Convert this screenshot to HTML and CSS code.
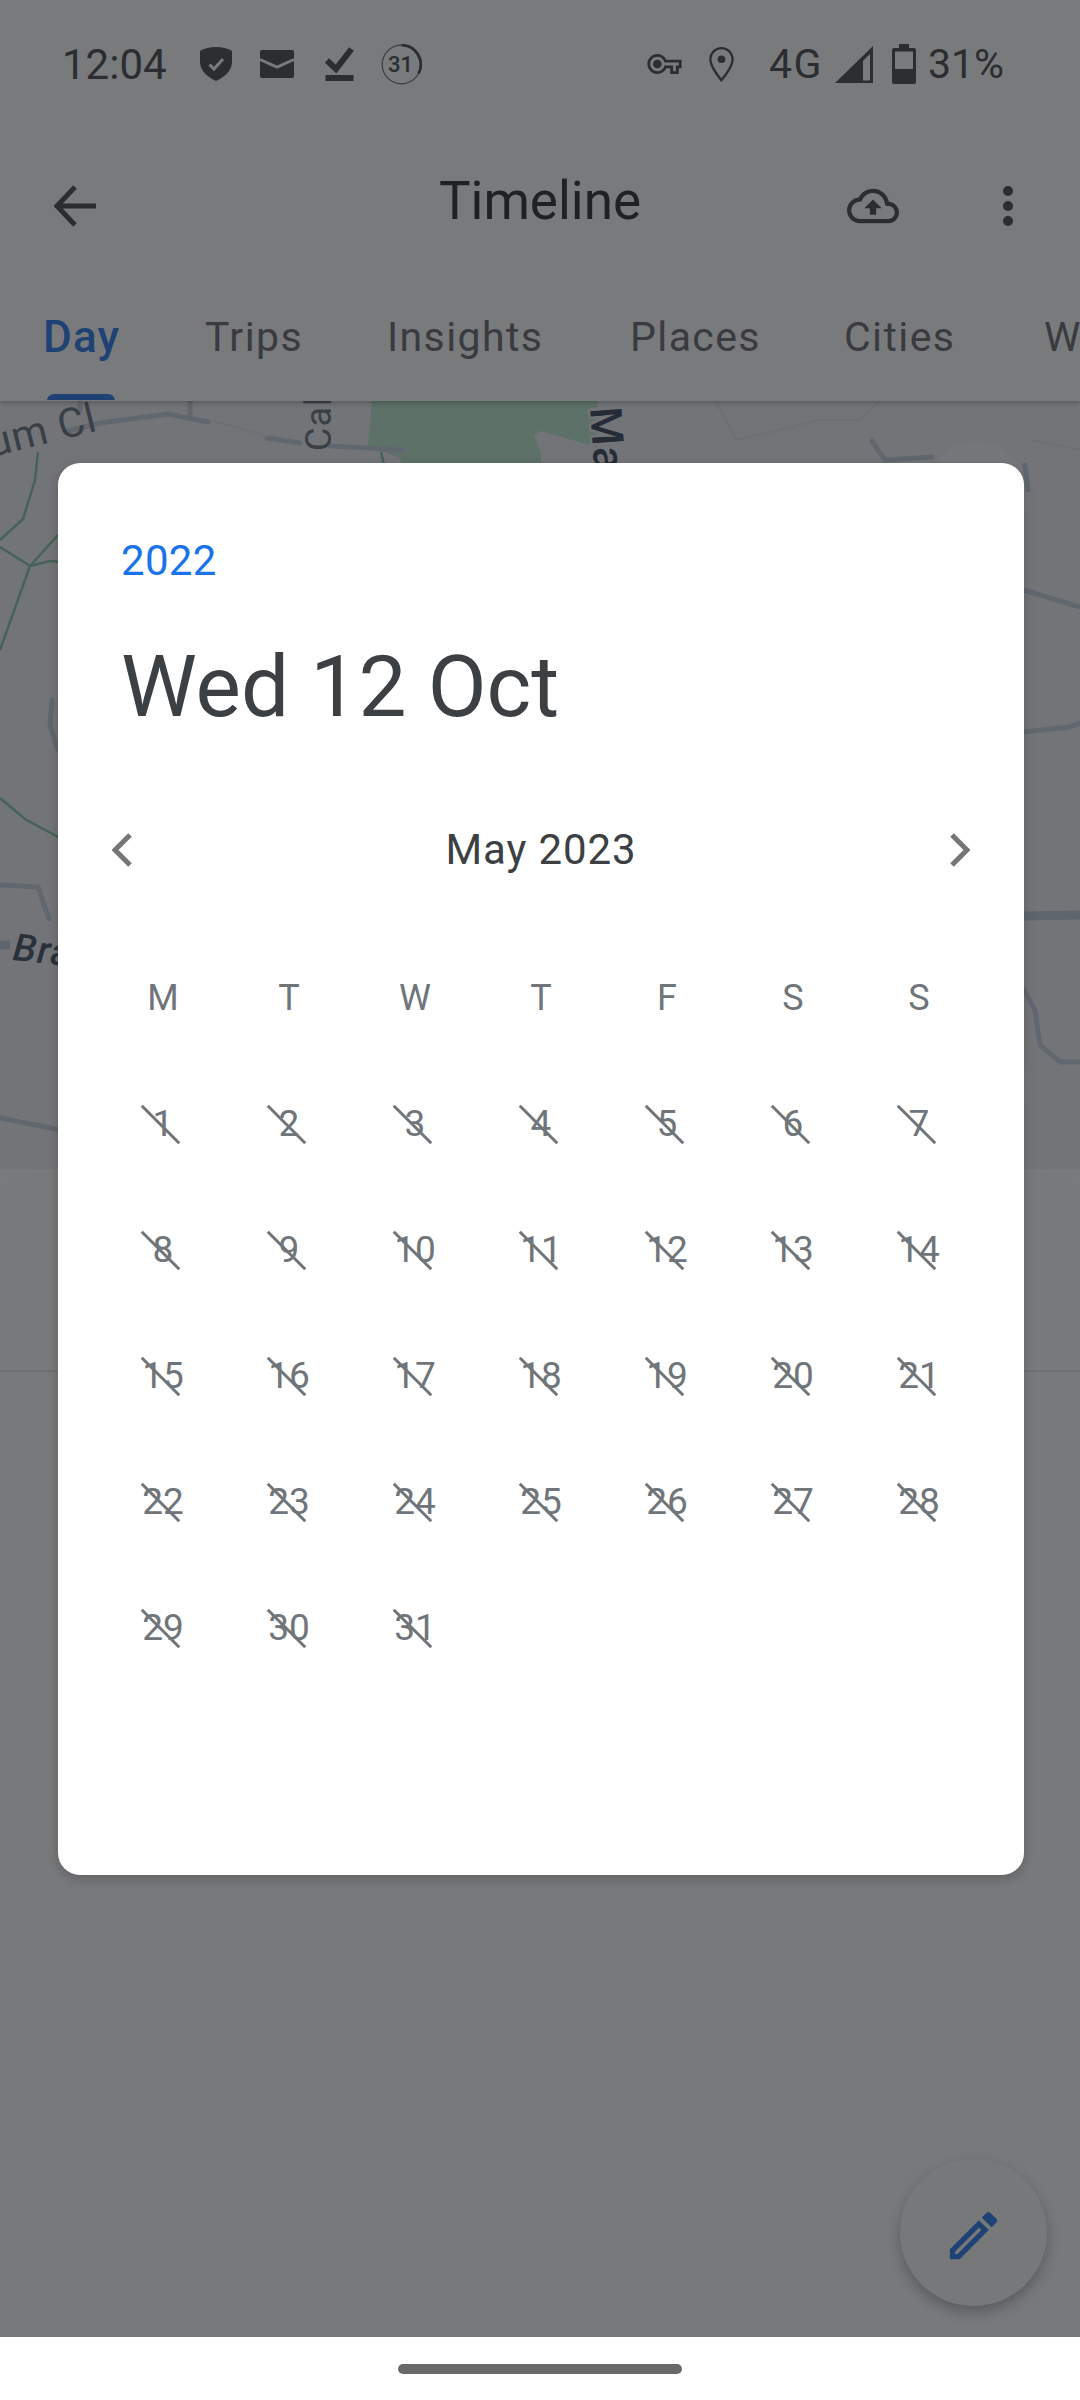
FILE: index.html
```html
<!DOCTYPE html>
<html lang="en">
<head>
<meta charset="utf-8">
<title>Timeline</title>
<link rel="stylesheet" href="styles.css">
</head>
<body>
<div class="app">
  <div class="content">
    <div class="page">
      <header class="header">
        <div class="status">
          <div class="status-group">
            <span class="clock">12:04</span>
            <svg class="i-shield" viewBox="0 0 34 34"><path class="solid" d="M17 0C23 0 29 1.500 33 4V15C33 24 25 30.500 17 34C9 30.500 1 24 1 15V4C5 1.500 11 0 17 0Z"/><path class="cut" d="M10.500 17.500l4.500 4.500 9-10"/></svg>
            <svg class="i-mail" viewBox="0 0 34 28"><rect class="solid" width="34" height="28" rx="2"/><path class="cut" d="M0 9.500l17 7.500 17-7.500"/></svg>
            <svg class="i-task" viewBox="0 0 28 34"><path class="line" d="M1.500 13.500l9 8.500L26 2"/><rect class="solid" y="28" width="28" height="6"/></svg>
            <svg class="i-cal" viewBox="0 0 40 41"><circle class="ring" cx="20" cy="20.500" r="19.300"/><path class="arc" d="M20 1.200A19.300 19.300 0 0 1 37 29.500"/><text class="cal-num" x="19" y="28">31</text></svg>
          </div>
          <div class="status-group right">
            <svg class="i-key" viewBox="0 5 24 14"><path class="solid" d="M22 19h-6v-4h-2.680c-1.140 2.420-3.600 4-6.320 4-3.860 0-7-3.140-7-7s3.140-7 7-7c2.720 0 5.170 1.580 6.320 4H24v6h-2v4zm-4-2h2v-4h2v-2H11.940l-.23-.67C11.010 8.340 9.110 7 7 7c-2.760 0-5 2.240-5 5s2.240 5 5 5c2.110 0 4.010-1.340 4.710-3.330l.23-.67H18v4zM7 15c-1.650 0-3-1.350-3-3s1.350-3 3-3 3 1.350 3 3-1.350 3-3 3z"/></svg>
            <svg class="i-pin" viewBox="5 2 14 20"><path class="solid" d="M12 2C8.130 2 5 5.130 5 9c0 5.250 7 13 7 13s7-7.750 7-13c0-3.870-3.130-7-7-7zM6.300 9c0-3 2.700-5.700 5.700-5.700s5.700 2.700 5.700 5.700c0 3.400-3.400 7.900-5.700 10.800C9.800 17 6.300 12.400 6.300 9z"/><circle class="solid" cx="12" cy="9" r="2.200"/></svg>
            <span class="net">4G</span>
            <svg class="i-signal" viewBox="0 0 38 37"><path class="solid" fill-rule="evenodd" d="M0 37L38 0V37ZM28 34.500H35V8L28 14.800Z"/></svg>
            <svg class="i-batt" viewBox="0 0 24 40"><path class="solid" fill-rule="evenodd" d="M7 0H17V4H22Q24 4 24 6V38Q24 40 22 40H2Q0 40 0 38V6Q0 4 2 4H7ZM3 7.500V25H21V7.500Z"/></svg>
            <span class="pct">31%</span>
          </div>
        </div>
        <div class="appbar">
          <div class="bar-left">
            <svg class="i-back" viewBox="0 0 42 42"><path class="line2" d="M42 21H4M21 2L3 21l18 19"/></svg>
          </div>
          <h1 class="title">Timeline</h1>
          <div class="bar-right">
            <svg class="i-cloud" viewBox="0 0 24 24"><path class="solid" d="M19.350 10.040C18.670 6.590 15.640 4 12 4 9.110 4 6.600 5.640 5.350 8.040 2.340 8.360 0 10.910 0 14c0 3.310 2.690 6 6 6h13c2.760 0 5-2.240 5-5 0-2.640-2.050-4.780-4.650-4.960zM19 18H6c-2.210 0-4-1.790-4-4 0-2.050 1.530-3.760 3.560-3.970l1.070-.11.5-.95C8.080 7.140 9.940 6 12 6c2.620 0 4.880 1.860 5.390 4.430l.3 1.500 1.530.11c1.560.1 2.780 1.410 2.780 2.960 0 1.650-1.350 3-3 3z"/><path class="solid" d="M8 13h2.550v3h2.900v-3H16l-4-4z"/></svg>
            <div class="dots"><i></i><i></i><i></i></div>
          </div>
        </div>
        <nav class="tabs">
          <span class="tab active">Day</span>
          <span class="tab">Trips</span>
          <span class="tab">Insights</span>
          <span class="tab">Places</span>
          <span class="tab">Cities</span>
          <span class="tab">Workouts</span>
        </nav>
      </header>
      <main class="main">
        <svg class="map" viewBox="0 401 1080 768">
          <rect x="0" y="401" width="1080" height="768" class="map-bg"/>
          <path class="park" d="M372 401H597V447L540 431L534 436L541 452V470H403L400 458L368 446Z"/>
          <g class="faint">
            <path d="M208 420L265 435"/>
            <path d="M715 401L737 440L820 420L860 420L880 401"/>
            <path d="M1030 440L1080 450"/>
          </g>
          <g class="trail">
            <path d="M38 452L35 480L23 519L0 540"/>
            <path d="M0 547L30 566L58 535"/>
            <path d="M30 566L0 650"/>
            <path d="M30 566L50 561L60 562"/>
            <path d="M0 798L25 819L60 838"/>
            <path d="M381 452L384 465"/>
          </g>
          <g class="road">
            <path d="M65 432L100 423L168 414L208 422M80 401V410M190 401V415"/>
            <path d="M267 438L300 443M330 446L403 450"/>
            <path d="M0 885L38 887L49 919"/>
            <path d="M0 1118L60 1130"/>
            <path d="M52 700L50 725L58 750"/>
            <path d="M872 441L885 460L932 457"/>
            <path d="M1024 590L1080 607"/>
            <path d="M1024 732L1070 727L1080 723"/>
            <path d="M1024 990L1035 1010L1040 1045L1060 1062L1080 1062"/>
          </g>
          <path class="road-wide" d="M1024 916L1080 915M0 945H10"/>
          <circle class="map-btn" cx="976" cy="496" r="53"/>
          <circle class="map-btn" cx="976" cy="1085" r="53"/>
          <path class="road" d="M1025 465L1028 490"/>
          <text class="lbl" transform="translate(-8 457) rotate(-14)">um Cl</text>
          <text class="lbl lbl-cal" transform="translate(331 451) rotate(-90)">Cal</text>
          <text class="lbl lbl-ma" transform="translate(590 408) rotate(86)">Ma</text>
          <text class="lbl lbl-dark" transform="translate(12 960) rotate(6)">Bra</text>
        </svg>
        <section class="sheet">
          <div class="sheet-row"></div>
        </section>
      </main>
    </div>
    <button class="fab" type="button" aria-label="Edit">
      <svg class="i-edit" viewBox="0 0 24 24"><path d="M14.060 9.020l.92.92L5.920 19H5v-.92l9.060-9.060M17.660 3c-.25 0-.51.1-.7.29l-1.830 1.830 3.750 3.750 1.830-1.830c.39-.39.39-1.020 0-1.410l-2.340-2.340c-.2-.2-.45-.29-.71-.29zm-3.600 3.190L3 17.250V21h3.750L17.810 9.940l-3.750-3.750z"/></svg>
    </button>
    <div class="scrim">
      <div class="dialog">
        <div class="year">2022</div>
        <div class="date">Wed 12 Oct</div>
        <div class="month-row">
          <span class="chev"><svg viewBox="0 0 20 34"><path d="M18 2L3 17l15 15"/></svg></span>
          <span class="month">May 2023</span>
          <span class="chev"><svg viewBox="0 0 20 34"><path d="M2 2l15 15L2 32"/></svg></span>
        </div>
        <div class="weekdays">
          <span>M</span><span>T</span><span>W</span><span>T</span><span>F</span><span>S</span><span>S</span>
        </div>
        <div class="days">
          <span>1</span><span>2</span><span>3</span><span>4</span><span>5</span><span>6</span><span>7</span>
          <span>8</span><span>9</span><span>10</span><span>11</span><span>12</span><span>13</span><span>14</span>
          <span>15</span><span>16</span><span>17</span><span>18</span><span>19</span><span>20</span><span>21</span>
          <span>22</span><span>23</span><span>24</span><span>25</span><span>26</span><span>27</span><span>28</span>
          <span>29</span><span>30</span><span>31</span>
        </div>
      </div>
    </div>
  </div>
  <footer class="navbar"><div class="pill"></div></footer>
</div>
</body>
</html>
```
FILE: styles.css
```css
* { box-sizing: border-box; }
html, body { margin: 0; padding: 0; }
body { width: 1080px; height: 2400px; overflow: hidden; background: #fff; font-family: Roboto, "Noto Sans", sans-serif; }

.app { display: flex; flex-direction: column; width: 1080px; height: 2400px; }
.content { position: relative; flex: 1; overflow: hidden; }
.page { display: flex; flex-direction: column; height: 100%; background: #fff; }
.navbar { display: flex; justify-content: center; align-items: center; flex: none; height: 63px; background: #fff; }
.pill { width: 284px; height: 10px; border-radius: 5px; background: #6a6a6a; }

/* icons */
.solid { fill: #3c4043; }
.cut { fill: none; stroke: #fff; stroke-width: 3; }
.line { fill: none; stroke: #3c4043; stroke-width: 6; }
.line2 { fill: none; stroke: #3c4043; stroke-width: 5; }

/* header */
.header { position: relative; flex: none; height: 401px; background: #fff; box-shadow: 0 2px 6px rgba(0,0,0,.3); }
.status { display: flex; justify-content: space-between; align-items: center; height: 128px; padding: 0 76px 0 62px; color: #3c4043; }
.status-group { display: flex; align-items: center; }
.clock { width: 103px; font-size: 42px; font-weight: 400; margin-right: 34px; white-space: nowrap; }
.i-shield { width: 34px; height: 34px; margin-right: 26px; }
.i-mail { width: 36px; height: 28px; margin-right: 30px; }
.i-task { width: 29px; height: 34px; margin-right: 27px; }
.i-cal { width: 41px; height: 41px; }
.ring { fill: none; stroke: #5f6368; stroke-width: 1.2; }
.arc { fill: none; stroke: #3c4043; stroke-width: 2.800; }
.cal-num { font-family: Roboto, sans-serif; font-size: 22px; font-weight: 500; text-anchor: middle; fill: #3c4043; }
.i-key { width: 35px; height: 20px; margin-right: 27px; }
.i-pin { width: 25px; height: 35px; margin-right: 35px; }
.net { font-size: 41px; letter-spacing: 1.500px; margin-right: 12px; white-space: nowrap; }
.i-signal { width: 38px; height: 37px; margin-right: 19px; }
.i-batt { width: 24px; height: 40px; margin-right: 12px; }
.pct { font-size: 41px; white-space: nowrap; }

.appbar { display: grid; grid-template-columns: 1fr auto 1fr; align-items: center; height: 156px; }
.bar-left { padding-left: 54px; display: flex; }
.i-back { width: 42px; height: 42px; }
.title { margin: 0 0 10px; font-size: 53px; font-weight: 400; line-height: 60px; color: #202124; }
.bar-right { display: flex; justify-content: flex-end; align-items: center; padding-right: 67px; }
.i-cloud { width: 52px; height: 52px; margin-right: 104px; }
.dots { display: flex; flex-direction: column; gap: 5px; }
.dots i { display: block; width: 10px; height: 10px; border-radius: 50%; background: #3c4043; }

.tabs { display: grid; grid-template-columns: 162px 182px 243px 214px 200px 300px; height: 116px; padding: 29px 0 0 43px; overflow: hidden; }
.tab { position: relative; font-size: 41px; letter-spacing: 1.400px; line-height: 48px; color: #5f6368; white-space: nowrap; }
.tab.active { font-size: 44px; font-weight: 500; letter-spacing: 1.200px; color: #1a73e8; }
.tab.active::after { content: ""; position: absolute; left: 4px; width: 68px; top: 81px; height: 7px; border-radius: 7px 7px 0 0; background: #1a73e8; }

/* map */
.main { flex: 1; display: flex; flex-direction: column; min-height: 0; }
.map { display: block; flex: none; width: 1080px; height: 768px; }
.map-bg { fill: #f1f1f3; }
.park { fill: #b9e8cc; }
.faint path { fill: none; stroke: #e4e4e6; stroke-width: 2; }
.trail path { fill: none; stroke: #7fc4a6; stroke-width: 2.500; }
.road path, path.road { fill: none; stroke: #c4d0dc; stroke-width: 5; stroke-linecap: round; }
.road-wide { fill: none; stroke: #bccad8; stroke-width: 9; }
.map-btn { fill: #f8f8f9; }
.lbl { font-family: Roboto, sans-serif; font-size: 41px; letter-spacing: 1px; fill: #5f6b76; }
.lbl-cal { font-size: 36px; }
.lbl-ma { font-size: 44px; font-weight: 500; fill: #2f3d52; paint-order: stroke; stroke: #f1f1f3; stroke-width: 5px; }
.lbl-dark { font-size: 38px; font-style: italic; font-weight: 500; fill: #3c4a5a; }
.sheet { flex: 1; background: #fcfcfd; border-radius: 36px 36px 0 0; }
.sheet-row { height: 203px; border-bottom: 2px solid #e4e5e7; }

/* FAB */
.fab { position: absolute; right: 33px; bottom: 31px; display: flex; align-items: center; justify-content: center; width: 147px; height: 147px; padding: 6px 0 0; border: 0; border-radius: 50%; background: #fafafa; box-shadow: 0 6px 14px rgba(0,0,0,.3); }
.i-edit { width: 63px; height: 63px; fill: #1a73e8; }

/* scrim + dialog */
.scrim { position: absolute; inset: 0; display: flex; align-items: center; justify-content: center; padding-left: 2px; background: rgba(32,33,36,.6); }
.dialog { width: 966px; height: 1412px; padding-top: 73px; border-radius: 22px; background: #fff; box-shadow: 0 4px 12px rgba(0,0,0,.2); }
.year { padding-left: 63px; font-size: 42px; letter-spacing: .3px; line-height: 50px; color: #1a73e8; }
.date { margin-top: 51px; padding-left: 63px; font-size: 85.500px; line-height: 100px; color: #3c4043; }
.month-row { display: flex; align-items: center; justify-content: space-between; height: 126px; margin-top: 50px; padding: 0 22px; }
.chev { display: flex; justify-content: center; width: 84px; }
.chev svg { width: 20px; height: 34px; fill: none; stroke: #757575; stroke-width: 5; }
.month { font-size: 42px; letter-spacing: .9px; color: #3c4043; }
.weekdays, .days { display: grid; grid-template-columns: repeat(7, 126px); padding: 0 42px; }
.weekdays { margin-top: 22px; }
.weekdays span { display: flex; align-items: center; justify-content: center; height: 126px; font-size: 36px; color: #70757a; }
.days span { position: relative; display: flex; align-items: center; justify-content: center; height: 126px; font-size: 37px; color: #70757a; }
.days span::after { content: ""; position: absolute; left: 34px; top: 62.500px; width: 53px; height: 3px; background: #70757a; transform: rotate(45deg); }
```
